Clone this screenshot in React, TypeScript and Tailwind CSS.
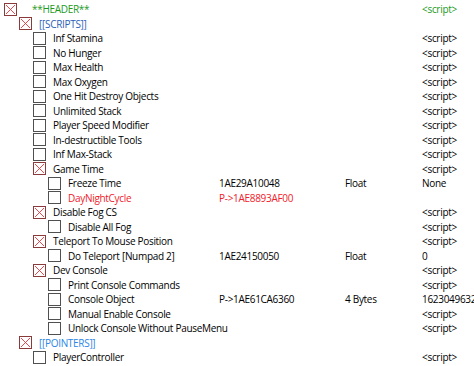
type Row = {
  level: number;
  name: string;
  checked?: boolean;
  address?: string;
  type?: string;
  value?: string;
  nameColor?: string;
  addrColor?: string;
  valueColor?: string;
  header?: boolean;
};

const rows: Row[] = [
  { level: 0, name: "**HEADER**", checked: true, nameColor: "text-[#1c9a1c]", value: "<script>", valueColor: "text-[#1c9a1c]", header: true },
  { level: 1, name: "[[SCRIPTS]]", checked: true, nameColor: "text-[#2a5fb8]" },
  { level: 2, name: "Inf Stamina", value: "<script>" },
  { level: 2, name: "No Hunger", value: "<script>" },
  { level: 2, name: "Max Health", value: "<script>" },
  { level: 2, name: "Max Oxygen", value: "<script>" },
  { level: 2, name: "One Hit Destroy Objects", value: "<script>" },
  { level: 2, name: "Unlimited Stack", value: "<script>" },
  { level: 2, name: "Player Speed Modifier", value: "<script>" },
  { level: 2, name: "In-destructible Tools", value: "<script>" },
  { level: 2, name: "Inf Max-Stack", value: "<script>" },
  { level: 2, name: "Game Time", checked: true, value: "<script>" },
  { level: 3, name: "Freeze Time", address: "1AE29A10048", type: "Float", value: "None" },
  { level: 3, name: "DayNightCycle", nameColor: "text-[#f0202a]", address: "P->1AE8893AF00", addrColor: "text-[#f0202a]" },
  { level: 2, name: "Disable Fog CS", checked: true, value: "<script>" },
  { level: 3, name: "Disable All Fog", value: "<script>" },
  { level: 2, name: "Teleport To Mouse Position", checked: true, value: "<script>" },
  { level: 3, name: "Do Teleport [Numpad 2]", address: "1AE24150050", type: "Float", value: "0" },
  { level: 2, name: "Dev Console", checked: true, value: "<script>" },
  { level: 3, name: "Print Console Commands", value: "<script>" },
  { level: 3, name: "Console Object", address: "P->1AE61CA6360", type: "4 Bytes", value: "1623049632" },
  { level: 3, name: "Manual Enable Console", value: "<script>" },
  { level: 3, name: "Unlock Console Without PauseMenu", value: "<script>" },
  { level: 1, name: "[[POINTERS]]", checked: true, nameColor: "text-[#2b86e6]" },
  { level: 2, name: "PlayerController", value: "<script>" },
];

const indent = ["pl-[4px]", "pl-[19px]", "pl-[33px]", "pl-[48px]"];

function Box({ checked }: { checked?: boolean }) {
  return (
    <div
      className={
        "w-[13px] h-[13px] shrink-0 border bg-white " +
        (checked ? "border-[#8a3a3a]" : "border-[#505050]")
      }
    >
      {checked && (
        <svg width="11" height="11" viewBox="0 0 11 11" className="block">
          <path d="M1 1 L10 10 M10 1 L1 10" stroke="#e8343c" strokeWidth="0.9" />
        </svg>
      )}
    </div>
  );
}

export default function App() {
  return (
    <div
      className="w-[474px] h-[366px] bg-white overflow-hidden pt-[2px] text-[10px] tracking-[-0.3px] text-black leading-[14.5px]"
      style={{ fontFamily: '"Open Sans", "Noto Sans", sans-serif' }}
    >
      {rows.map((r, i) => (
        <div key={i} className="flex items-center h-[14.5px] whitespace-nowrap">
          <div className={"flex items-center w-[219px] shrink-0 " + indent[r.level]}>
            <Box checked={r.checked} />
            <span className={(r.header ? "ml-[15px] " : "ml-[7px] ") + (r.nameColor ?? "")}>
              {r.name}
            </span>
          </div>
          <div className={"w-[126px] shrink-0 " + (r.addrColor ?? "")}>{r.address ?? ""}</div>
          <div className="w-[77px] shrink-0">{r.type ?? ""}</div>
          <div className={r.valueColor ?? ""}>{r.value ?? ""}</div>
        </div>
      ))}
    </div>
  );
}
